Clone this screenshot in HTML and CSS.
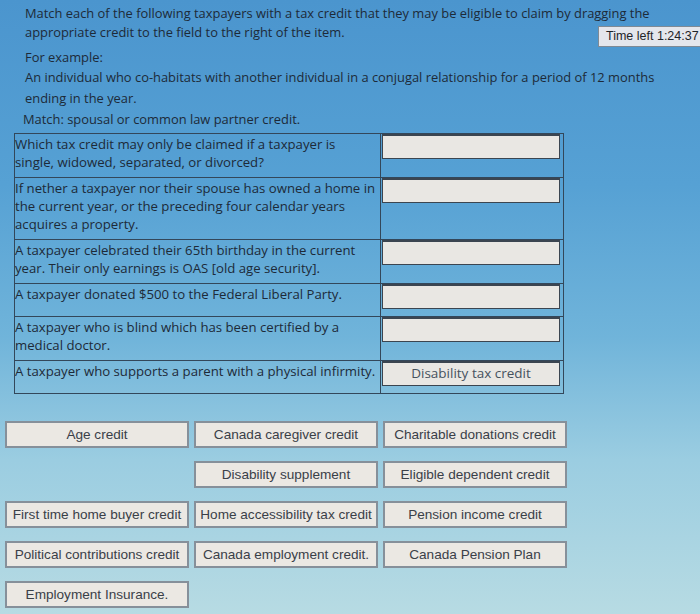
FILE: index.html
```html
<!DOCTYPE html>
<html lang="en">
<head>
<meta charset="utf-8">
<title>Match tax credits</title>
<link rel="stylesheet" href="styles.css">
</head>
<body>
<div class="page">
  <div class="intro">
    <p class="lead">Match each of the following taxpayers with a tax credit that they may be eligible to claim by dragging the<br>appropriate credit to the field to the right of the item.</p>
    <div class="timer">Time left 1:24:37</div>
    <p class="ex">For example:</p>
    <p class="ex2">An individual who co-habitats with another individual in a conjugal relationship for a period of 12 months<br>ending in the year.</p>
    <p class="ex3">Match: spousal or common law partner credit.</p>
  </div>

  <table class="match">
    <tr>
      <td class="item">Which tax credit may only be claimed if a taxpayer is<br>single, widowed, separated, or divorced?</td>
      <td class="slot"><div class="drop"></div></td>
    </tr>
    <tr>
      <td class="item">If nether a taxpayer nor their spouse has owned a home in<br>the current year, or the preceding four calendar years<br>acquires a property.</td>
      <td class="slot"><div class="drop"></div></td>
    </tr>
    <tr>
      <td class="item">A taxpayer celebrated their 65th birthday in the current<br>year. Their only earnings is OAS [old age security].</td>
      <td class="slot"><div class="drop"></div></td>
    </tr>
    <tr>
      <td class="item">A taxpayer donated $500 to the Federal Liberal Party.</td>
      <td class="slot"><div class="drop"></div></td>
    </tr>
    <tr>
      <td class="item">A taxpayer who is blind which has been certified by a<br>medical doctor.</td>
      <td class="slot"><div class="drop"></div></td>
    </tr>
    <tr>
      <td class="item">A taxpayer who supports a parent with a physical infirmity.</td>
      <td class="slot"><div class="drop">Disability tax credit</div></td>
    </tr>
  </table>

  <div class="bank">
    <div class="chip">Age credit</div>
    <div class="chip">Canada caregiver credit</div>
    <div class="chip">Charitable donations credit</div>
    <div class="empty"></div>
    <div class="chip">Disability supplement</div>
    <div class="chip">Eligible dependent credit</div>
    <div class="chip">First time home buyer credit</div>
    <div class="chip">Home accessibility tax credit</div>
    <div class="chip">Pension income credit</div>
    <div class="chip">Political contributions credit</div>
    <div class="chip">Canada employment credit.</div>
    <div class="chip">Canada Pension Plan</div>
    <div class="chip">Employment Insurance.</div>
  </div>
</div>
</body>
</html>
```

FILE: styles.css
```css
html, body {
  margin: 0;
  padding: 0;
  height: 100%;
  overflow: hidden;
}
body {
  background: linear-gradient(180deg, #4b95ce 0%, #56a1d4 30%, #70b4da 55%, #9bcde1 75%, #b7dbe3 100%);
  font-family: "Open Sans", "Noto Sans", sans-serif;
  color: #1d2a38;
  font-size: 12.9px;
}
.page {
  position: relative;
  width: 700px;
  height: 614px;
}
.intro {
  padding: 4px 0 0 25px;
}
.intro p {
  margin: 0;
  line-height: 19px;
}
.intro .ex {
  margin-top: 6px;
}
.intro .ex2 {
  line-height: 21px;
}
.intro .ex3 {
  line-height: 21px;
  margin-left: -2px;
}
.timer {
  position: absolute;
  left: 598px;
  top: 26px;
  width: 102px;
  height: 21px;
  box-sizing: border-box;
  background: #e4e6ec;
  border: 1px solid #7f8a95;
  border-right: none;
  font-family: "Liberation Sans", Arial, sans-serif;
  font-size: 12.5px;
  line-height: 19px;
  padding-left: 7px;
  color: #1f2428;
  white-space: nowrap;
}
.match {
  border-collapse: collapse;
  margin: 3px 0 0 14px;
}
.match td {
  border-top: 1px solid #33475a;
  border-bottom: 1px solid #33475a;
  vertical-align: top;
  padding: 0;
}
.match td.item {
  width: 365px;
  border-left: 1px solid #33475a;
  border-right: 1px solid #33475a;
  font-size: 13.2px;
  line-height: 18px;
  padding: 1px 0 6px 0;
  white-space: nowrap;
  color: #1d2a38;
}
.match td.slot {
  width: 182px;
  height: 32px;
  border-right: 1px solid #33475a;
}
.drop {
  height: 25px;
  margin: 0 3px 0 1px;
  box-sizing: border-box;
  background: #e9e7e3;
  border: 1px solid #3b4550;
  border-top-width: 2px;
  text-align: center;
  line-height: 21px;
  font-size: 13.5px;
  color: #46525e;
}
.bank {
  display: grid;
  grid-template-columns: repeat(3, 184px);
  grid-auto-rows: 27px;
  column-gap: 5px;
  row-gap: 13px;
  margin: 27px 0 0 5px;
}
.chip {
  box-sizing: border-box;
  background: #ebe8e3;
  border: 2px solid #86909a;
  font-family: "Liberation Sans", Arial, sans-serif;
  font-size: 13.6px;
  line-height: 23px;
  text-align: center;
  color: #3a4048;
  white-space: nowrap;
}
```
